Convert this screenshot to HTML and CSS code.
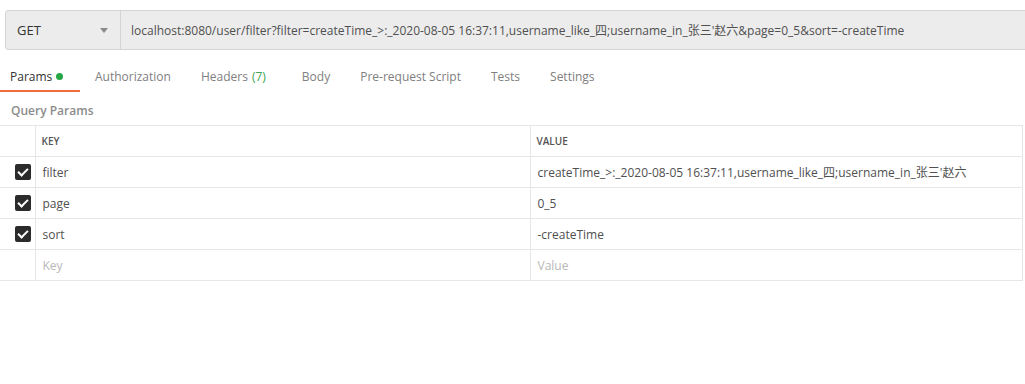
FILE: index.html
```html
<!DOCTYPE html>
<html lang="en">
<head>
  <meta charset="UTF-8" />
  <title>Request</title>
  <link rel="stylesheet" href="styles.css">
</head>
<body>
<div class="request-bar">
  <div class="method">
    <span>GET</span>
    <span class="caret"></span>
  </div>
  <div class="url">localhost:8080/user/filter?filter=createTime_&gt;:_2020-08-05 16:37:11,username_like_四;username_in_张三'赵六&amp;page=0_5&amp;sort=-createTime</div>
</div>

<nav class="tabs">
  <a class="active">Params <span class="dot"></span></a>
  <a>Authorization</a>
  <a class="wide">Headers <span class="count">(7)</span></a>
  <a>Body</a>
  <a>Pre-request Script</a>
  <a>Tests</a>
  <a>Settings</a>
</nav>

<h4 class="section-title">Query Params</h4>

<table class="params">
  <thead>
    <tr>
      <th class="check"></th>
      <th class="key">KEY</th>
      <th>VALUE</th>
    </tr>
  </thead>
  <tbody>
    <tr>
      <td class="check"><span class="box"></span></td>
      <td>filter</td>
      <td>createTime_&gt;:_2020-08-05 16:37:11,username_like_四;username_in_张三'赵六</td>
    </tr>
    <tr>
      <td class="check"><span class="box"></span></td>
      <td>page</td>
      <td>0_5</td>
    </tr>
    <tr>
      <td class="check"><span class="box"></span></td>
      <td>sort</td>
      <td>-createTime</td>
    </tr>
    <tr class="empty">
      <td class="check"></td>
      <td>Key</td>
      <td>Value</td>
    </tr>
  </tbody>
</table>
</body>
</html>
```

FILE: styles.css
```css
* { box-sizing: border-box; margin: 0; padding: 0; }
body {
  font-family: 'Open Sans', 'Noto Sans CJK SC', sans-serif;
  font-size: 12px;
  color: #505050;
  background: #fff;
  overflow: hidden;
}

.request-bar {
  display: flex;
  margin: 10px 0 0 5px;
  height: 40px;
  width: 1040px;
  background: #ececec;
  border: 1px solid #d4d4d4;
  border-radius: 3px;
}
.method {
  width: 115px;
  display: flex;
  align-items: center;
  justify-content: space-between;
  padding: 0 12px 0 11px;
  border-right: 1px solid #d4d4d4;
  font-size: 13px;
  color: #333;
}
.caret {
  width: 0;
  height: 0;
  border-left: 4px solid transparent;
  border-right: 4px solid transparent;
  border-top: 5px solid #8a8a8a;
}
.url {
  display: flex;
  align-items: center;
  padding-left: 10px;
  color: #505050;
  white-space: nowrap;
}

.tabs {
  display: flex;
  margin-top: 16px;
  height: 26px;
}
.tabs a {
  display: flex;
  align-items: flex-start;
  padding: 2px 15px 0;
  color: #808080;
  font-size: 12px;
  height: 26px;
}
.tabs a.active {
  color: #333;
  width: 80px;
  padding-left: 10px;
  border-bottom: 2px solid #f26b3a;
}
.tabs a.wide { padding-right: 21px; }
.dot {
  display: inline-block;
  width: 7px;
  height: 7px;
  border-radius: 50%;
  background: #26a544;
  margin: 5px 0 0 4px;
}
.count { color: #3aa54c; margin-left: 4px; }

.section-title {
  font-size: 12px;
  font-weight: 600;
  color: #8c8c8c;
  padding: 10px 0 0 11px;
  height: 33px;
}

.params {
  border-collapse: collapse;
  width: 1023px;
  table-layout: fixed;
}
.params th, .params td {
  border: 1px solid #e6e6e6;
  height: 31px;
  text-align: left;
  padding: 0 7px;
  white-space: nowrap;
  overflow: hidden;
}
.params tr > :first-child { border-left: none; }
.params th {
  font-size: 10px;
  font-weight: 600;
  color: #555;
  padding: 0 6px;
}
.params .check { width: 35px; padding: 0 0 0 15px; }
.params .key { width: 495px; }
.box {
  display: block;
  width: 16px;
  height: 16px;
  border-radius: 2px;
  background: #2b2b2b;
  position: relative;
}
.box::after {
  content: "";
  position: absolute;
  left: 5px;
  top: 2px;
  width: 4px;
  height: 8px;
  border: solid #fff;
  border-width: 0 2.5px 2.5px 0;
  transform: rotate(45deg);
}
.empty td { color: #b8b8b8; }
```
